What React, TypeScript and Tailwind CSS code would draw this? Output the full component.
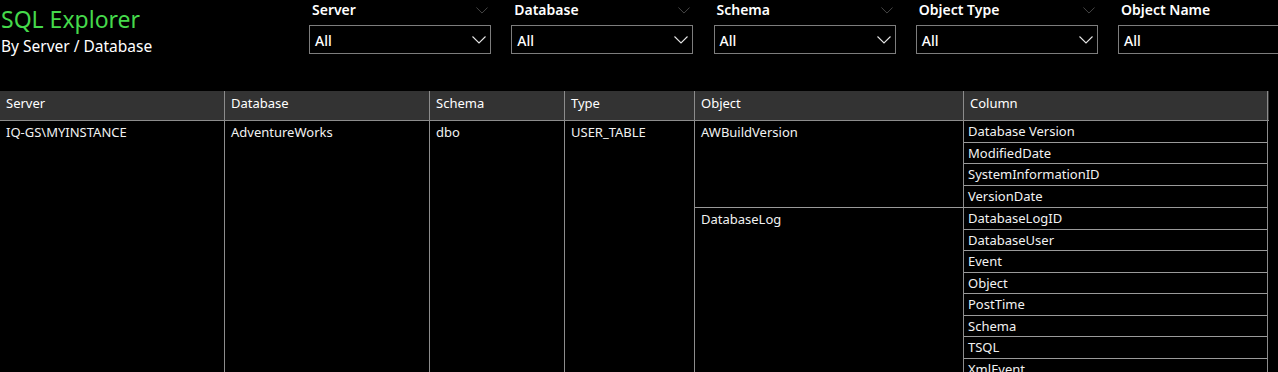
import React from 'react';

const slicers = ['Server', 'Database', 'Schema', 'Object Type', 'Object Name'];

const objects = [
  {
    name: 'AWBuildVersion',
    columns: ['Database Version', 'ModifiedDate', 'SystemInformationID', 'VersionDate'],
  },
  {
    name: 'DatabaseLog',
    columns: ['DatabaseLogID', 'DatabaseUser', 'Event', 'Object', 'PostTime', 'Schema', 'TSQL', 'XmlEvent', 'Extra'],
  },
];

const Chevron: React.FC<{ className?: string; stroke?: string }> = ({ className, stroke = '#e5e5e5' }) => (
  <svg className={className} viewBox="0 0 14 8" fill="none">
    <polyline points="0.5,0.5 7,7 13.5,0.5" stroke={stroke} strokeWidth="1.1" />
  </svg>
);

const Slicer: React.FC<{ label: string }> = ({ label }) => (
  <div className="w-[182px] shrink-0">
    <div className="h-[25px] flex items-start justify-between pl-[3px] pr-[3px]">
      <span className="text-[14px] font-semibold text-white leading-[20px]">{label}</span>
      <Chevron className="w-[12px] h-[7px] mt-[7px]" stroke="#4a4a4a" />
    </div>
    <div className="h-[29px] border border-[#7d7d7d] flex items-center justify-between pl-[5px] pr-[4px]">
      <span className="text-[14px] font-medium text-white leading-none mt-[2px]">All</span>
      {label !== 'Object Name' && <Chevron className="w-[14px] h-[8px]" />}
    </div>
  </div>
);

const headers = [
  { label: 'Server', w: 'w-[225px]' },
  { label: 'Database', w: 'w-[205px]' },
  { label: 'Schema', w: 'w-[135px]' },
  { label: 'Type', w: 'w-[130px]' },
  { label: 'Object', w: 'w-[269px]' },
  { label: 'Column', w: 'w-[304px]' },
];

export default function App() {
  return (
    <div className="w-[1278px] h-[372px] bg-black overflow-hidden text-[#f2f2f2] font-['Noto_Sans','Open_Sans',sans-serif]">
      <div className="flex h-[91px]">
        <div className="w-[309px] shrink-0 pl-px">
          <div className="text-[23px] leading-[32px] text-[#45d94b] mt-[3px]">SQL Explorer</div>
          <div className="text-[15.5px] leading-[20px] text-white mt-px">By Server / Database</div>
        </div>
        <div className="flex gap-[20.25px]">
          {slicers.map((s) => (
            <Slicer key={s} label={s} />
          ))}
        </div>
      </div>

      <div className="w-[1269px] text-[13px]">
        <div className="flex h-[30px] bg-[#333333] border-b border-[#8c8c8c]">
          {headers.map((h) => (
            <div key={h.label} className={`${h.w} shrink-0 border-r border-[#8c8c8c] pl-[6px] pt-[3px] leading-[18px] text-white`}>
              {h.label}
            </div>
          ))}
        </div>

        <div className="flex h-[252px]">
          <div className="w-[225px] shrink-0 border-r border-[#8c8c8c] pl-[6px] pt-[2px] leading-[18px]">IQ-GS\MYINSTANCE</div>
          <div className="w-[205px] shrink-0 border-r border-[#8c8c8c] pl-[6px] pt-[2px] leading-[18px]">AdventureWorks</div>
          <div className="w-[135px] shrink-0 border-r border-[#8c8c8c] pl-[6px] pt-[2px] leading-[18px]">dbo</div>
          <div className="w-[130px] shrink-0 border-r border-[#8c8c8c] pl-[6px] pt-[2px] leading-[18px]">USER_TABLE</div>
          <div className="flex flex-col">
            {objects.map((o) => (
              <div key={o.name} className="flex border-b border-[#9a9a9a]">
                <div className="w-[269px] shrink-0 border-r border-[#8c8c8c] pl-[6px] pt-[2px] leading-[18px]">{o.name}</div>
                <div className="w-[304px] shrink-0 border-r border-[#8c8c8c] flex flex-col">
                  {o.columns.map((c, i) => (
                    <div
                      key={c}
                      className={`h-[21.5px] pl-[4px] leading-[20px] ${i < o.columns.length - 1 ? 'border-b border-[#9a9a9a]' : ''}`}
                    >
                      {c === 'Extra' ? '' : c}
                    </div>
                  ))}
                </div>
              </div>
            ))}
          </div>
        </div>
      </div>
    </div>
  );
}
